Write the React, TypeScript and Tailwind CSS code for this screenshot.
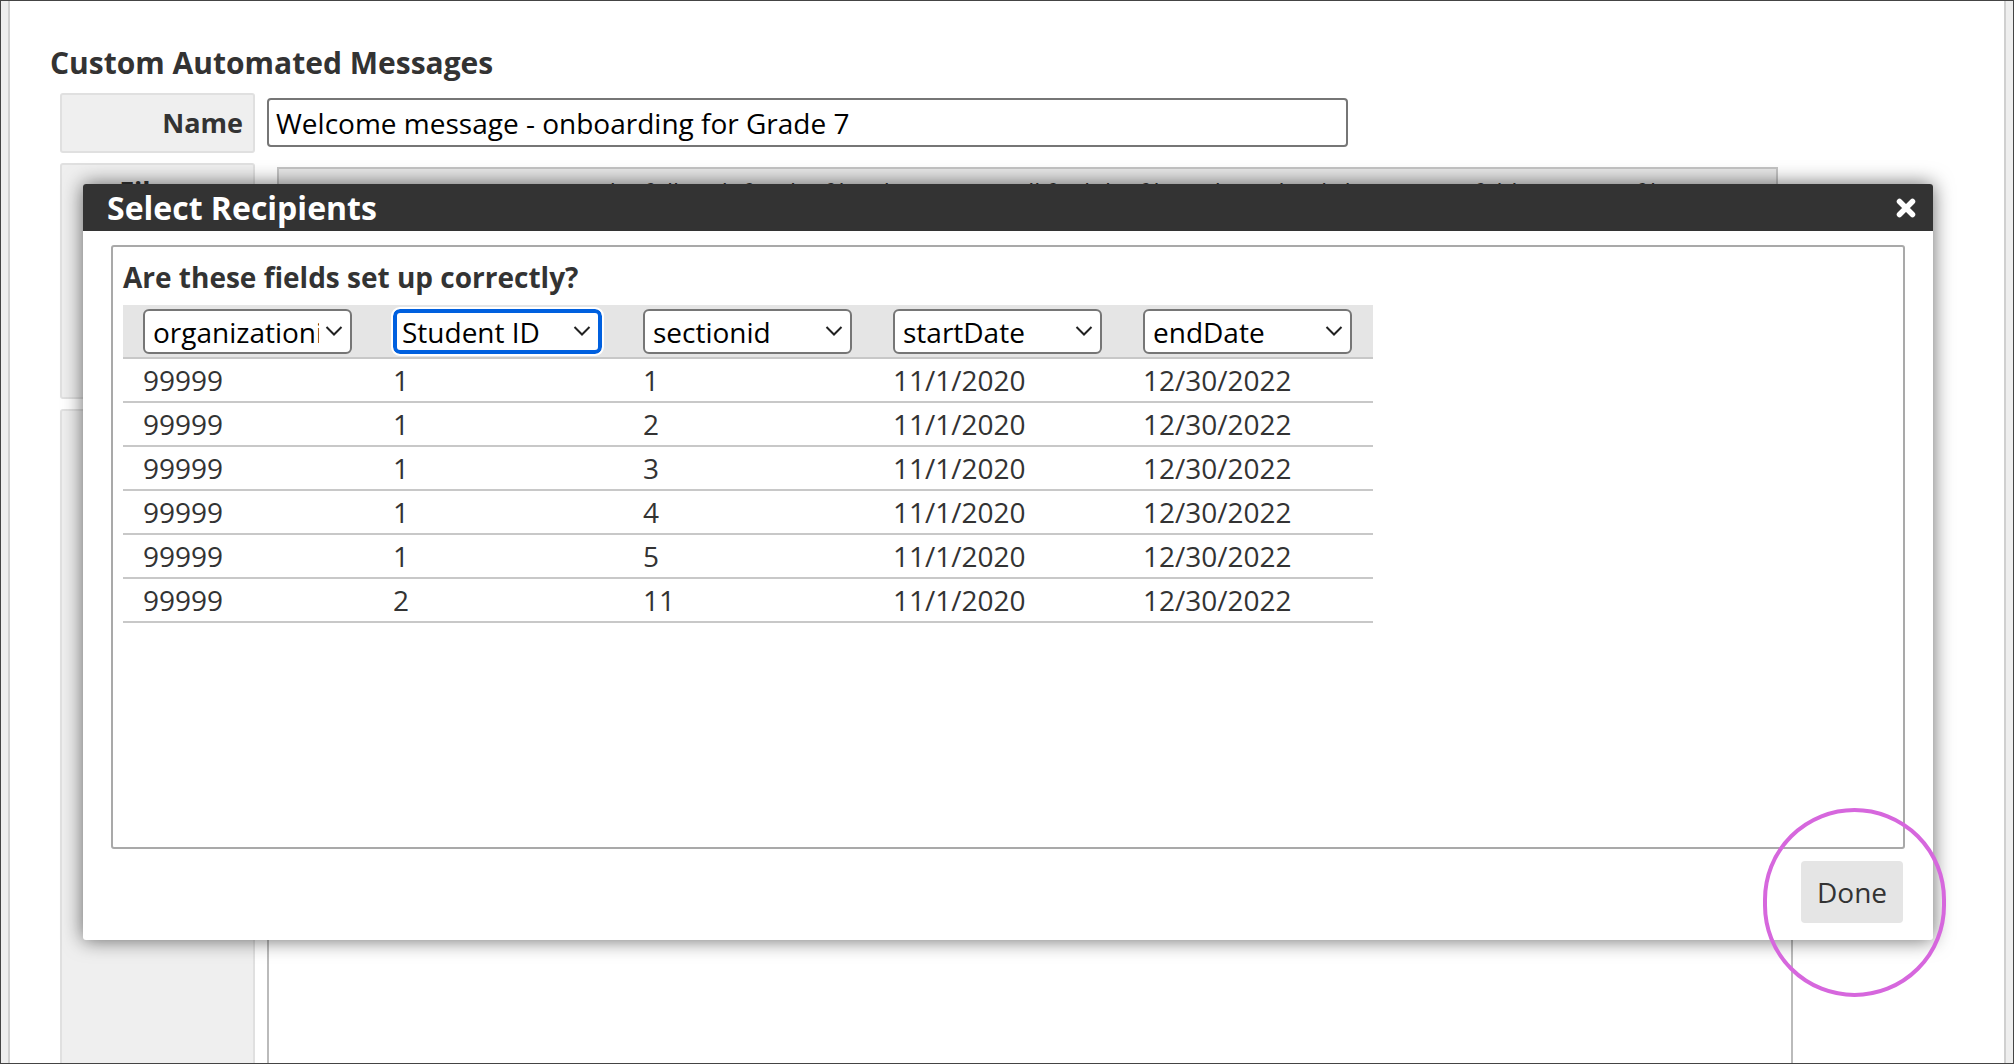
import React from "react";

const rows = [
  ["99999", "1", "1"],
  ["99999", "1", "2"],
  ["99999", "1", "3"],
  ["99999", "1", "4"],
  ["99999", "1", "5"],
  ["99999", "2", "11"],
];

function Chevron() {
  return (
    <svg width="18" height="11" viewBox="0 0 18 11" className="absolute right-[7px] top-1/2 -translate-y-1/2">
      <path d="M1.5 1.5 L9 9 L16.5 1.5" fill="none" stroke="#222" strokeWidth="2" />
    </svg>
  );
}

function Sel({ label, focused, clip }: { label: string; focused?: boolean; clip?: boolean }) {
  return (
    <div
      className={
        focused
          ? "relative w-[209px] h-[45px] rounded-[7px] bg-white border-4 border-[#0060df] outline outline-2 outline-white flex items-center pl-[5px] pt-[2px] text-[28px] text-black"
          : "relative w-[209px] h-[45px] rounded-[6px] bg-white border-2 border-[#767676] flex items-center pl-[8px] pt-[2px] text-[28px] text-black"
      }
    >
      <span className={clip ? "block w-[166px] overflow-hidden whitespace-nowrap" : "block whitespace-nowrap"}>{label}</span>
      <Chevron />
    </div>
  );
}

const heads: [string, boolean, boolean][] = [
  ["organizationid", false, true],
  ["Student ID", true, false],
  ["sectionid", false, false],
  ["startDate", false, false],
  ["endDate", false, false],
];

export default function App() {
  return (
    <div className="relative w-[2014px] h-[1064px] overflow-hidden bg-[#eeeeee] text-[#333] font-['Open_Sans',sans-serif] border border-[#444]">
      <div className="h-full mx-[7px] border-x-2 border-[#d0d0d0] pl-[40px] bg-white">
        <h1 className="pt-[43px] h-[92px] text-[30px] leading-[38px] font-bold text-[#333]">
          Custom Automated Messages
        </h1>
        <div className="flex flex-col gap-[10px] pl-[10px]">
          <div className="flex gap-[12px] items-start">
            <div className="w-[195px] h-[60px] bg-[#efefef] border-2 border-[#e0e0e0] rounded-[3px] flex items-center justify-end pr-[10px] pt-[1px] text-[27px] font-bold">
              Name
            </div>
            <div className="w-[1081px] h-[49px] mt-[5px] border-2 border-[#767676] rounded-[4px] bg-white flex items-center pl-[7px] text-[28px] text-black whitespace-nowrap">
              Welcome message - onboarding for Grade 7
            </div>
          </div>
          <div className="flex gap-[22px]">
            <div className="w-[195px] h-[236px] bg-[#efefef] border-2 border-[#e0e0e0] rounded-[3px] flex justify-end pr-[10px] pt-[6px] text-[27px] font-bold">
              Filename
            </div>
            <div className="w-[1501px] h-[100px] mt-[4px] bg-[#e8e8e8] border-2 border-[#c4c4c4] pl-[20px] pt-[5px] text-[24px] whitespace-nowrap overflow-hidden">
              It is not necessary to enter the full path for the file. The system will find the file in the upload/data import folder. Import files
            </div>
          </div>
          <div className="flex gap-[12px]">
            <div className="w-[195px] h-[660px] bg-[#efefef] border-2 border-[#e0e0e0] rounded-[3px]" />
            <div className="w-[1526px] h-[660px] border-x-2 border-[#bbb] bg-white" />
          </div>
        </div>
      </div>

      {/* modal */}
      <div className="absolute left-[82px] top-[183px] w-[1850px] h-[756px] bg-white rounded-[3px] shadow-[0_0_20px_rgba(0,0,0,0.6)] flex flex-col">
        <div className="h-[47px] bg-[#333] rounded-t-[3px] flex items-center justify-between pl-[24px] pr-[17px]">
          <span className="text-[32px] font-bold text-white leading-none">Select Recipients</span>
          <svg width="20" height="20" viewBox="0 0 20 20">
            <path d="M3.5 3.5 L16.5 16.5 M16.5 3.5 L3.5 16.5" stroke="#fff" strokeWidth="5.5" strokeLinecap="round" fill="none" />
          </svg>
        </div>
        <div className="mt-[14px] mx-[28px] h-[604px] border-2 border-[#a9a9a9] rounded-[3px] pl-[10px] pt-[11px]">
          <div className="text-[28px] leading-[38px] font-bold text-[#333] h-[47px]">Are these fields set up correctly?</div>
          <div className="w-[1250px]">
            <div className="h-[54px] bg-[#e5e5e5] border-b-2 border-[#c8c8c8] flex items-center gap-[41px] pl-[20px]">
              {heads.map(([l, f, c]) => (
                <Sel key={l} label={l} focused={f} clip={c} />
              ))}
            </div>
            {rows.map((r, i) => (
              <div key={i} className="h-[44px] border-b-2 border-[#c8c8c8] flex items-center pl-[20px] text-[28px] text-[#333]">
                <span className="w-[250px] shrink-0">{r[0]}</span>
                <span className="w-[250px] shrink-0">{r[1]}</span>
                <span className="w-[250px] shrink-0">{r[2]}</span>
                <span className="w-[250px] shrink-0">11/1/2020</span>
                <span className="w-[230px] shrink-0">12/30/2022</span>
              </div>
            ))}
          </div>
        </div>
        <div className="flex justify-end mr-[30px] mt-[12px]">
          <button className="w-[102px] h-[62px] bg-[#e5e5e5] rounded-[4px] text-[28px] text-[#333]">Done</button>
        </div>
      </div>

      {/* callout circle */}
      <div className="absolute left-[1762px] top-[807px] w-[183px] h-[189px] rounded-full border-4 border-[#d667dd]" />
    </div>
  );
}
